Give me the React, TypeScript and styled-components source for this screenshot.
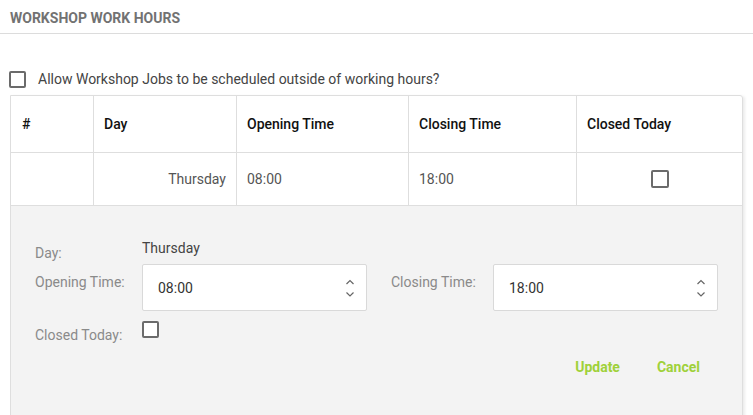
import React from "react";
import styled, { createGlobalStyle } from "styled-components";

const Global = createGlobalStyle`
  html, body { margin: 0; padding: 0; background: #fff; }
  body { font-family: Roboto, "Noto Sans", Arial, sans-serif; color: #333; overflow: hidden; }
  * { box-sizing: border-box; }
`;

const Page = styled.div`
  width: 753px;
  height: 415px;
  overflow: hidden;
`;

const TitleBar = styled.div`
  height: 34px;
  border-bottom: 1px solid #dcdcdc;
  padding: 10px 0 0 10px;
  font-size: 14px;
  font-weight: 700;
  color: #727272;
  line-height: 16px;
`;

const AllowRow = styled.label`
  display: flex;
  align-items: center;
  gap: 12px;
  margin: 37px 0 0 9px;
  height: 16px;
  font-size: 14px;
  color: #444;
`;

const Box = styled.span<{ $size?: number }>`
  display: inline-block;
  flex: none;
  width: ${(p) => p.$size ?? 17}px;
  height: ${(p) => p.$size ?? 17}px;
  border: 2px solid #6b6b6b;
  border-radius: 2px;
  background: #fff;
`;

const Card = styled.div`
  margin: 8px 0 0 10px;
  width: 733px;
  height: 330px;
  border: 1px solid #dedede;
  border-radius: 0 3px 0 0;
  box-shadow: 2px 1px 3px rgba(0, 0, 0, 0.08);
  overflow: hidden;
`;

const Row = styled.div<{ $h: number }>`
  display: grid;
  grid-template-columns: 82px 143px 172px 168px 1fr;
  height: ${(p) => p.$h}px;
  border-bottom: 1px solid #dedede;
`;

const Cell = styled.div<{ $head?: boolean; $align?: "left" | "right" | "center" }>`
  display: flex;
  align-items: center;
  justify-content: ${(p) =>
    p.$align === "right" ? "flex-end" : p.$align === "center" ? "center" : "flex-start"};
  padding: 0 10px 0 10px;
  border-left: 1px solid #dedede;
  font-size: 14px;
  font-weight: ${(p) => (p.$head ? 500 : 400)};
  color: ${(p) => (p.$head ? "#111" : "#555")};
  &:first-child { border-left: none; padding-left: 11px; }
`;

const Panel = styled.div`
  background: #f3f3f3;
  height: 100%;
  padding: 34px 0 0 24px;
`;

const FormGrid = styled.div`
  display: grid;
  grid-template-columns: 107px 225px 24px 102px 225px;
  row-gap: 3px;
`;

const Label = styled.div<{ $pt: number; $col?: number }>`
  grid-column: ${(p) => p.$col ?? 1};
  padding-top: ${(p) => p.$pt}px;
  font-size: 14px;
  line-height: 16px;
  color: #8a8a8a;
`;

const Value = styled.div<{ $col?: number }>`
  grid-column: ${(p) => p.$col ?? 2};
  font-size: 14px;
  line-height: 16px;
  color: #444;
`;

const TimeInput = styled.div<{ $col: number }>`
  grid-column: ${(p) => p.$col};
  height: 47px;
  background: #fff;
  border: 1px solid #d9d9d9;
  border-radius: 2px;
  display: flex;
  align-items: center;
  justify-content: space-between;
  padding: 0 11px 0 15px;
  font-size: 14px;
  color: #333;
`;

const Spin = styled.svg`
  width: 10px;
  height: 24px;
  margin-top: 1px;
`;

const CheckCell = styled.div`
  grid-column: 2;
  padding-top: 7px;
`;

const Actions = styled.div`
  display: flex;
  justify-content: flex-end;
  gap: 37px;
  width: 665px;
  margin-top: 16px;
`;

const LinkButton = styled.button`
  border: none;
  background: none;
  padding: 0;
  font-family: inherit;
  font-size: 14px;
  line-height: 16px;
  font-weight: 700;
  color: #9fd13a;
  cursor: pointer;
`;

const Spinner = () => (
  <Spin viewBox="0 0 10 24">
    <path d="M1.5 8 L5 4.5 L8.5 8" fill="none" stroke="#666" strokeWidth="1.2" />
    <path d="M1.5 16.5 L5 20 L8.5 16.5" fill="none" stroke="#666" strokeWidth="1.2" />
  </Spin>
);

export default function App() {
  return (
    <Page>
      <Global />
      <TitleBar>WORKSHOP WORK HOURS</TitleBar>
      <AllowRow>
        <Box />
        Allow Workshop Jobs to be scheduled outside of working hours?
      </AllowRow>
      <Card>
        <Row $h={57}>
          <Cell $head>#</Cell>
          <Cell $head>Day</Cell>
          <Cell $head>Opening Time</Cell>
          <Cell $head>Closing Time</Cell>
          <Cell $head>Closed Today</Cell>
        </Row>
        <Row $h={53}>
          <Cell />
          <Cell $align="right">Thursday</Cell>
          <Cell>08:00</Cell>
          <Cell>18:00</Cell>
          <Cell $align="center">
            <Box $size={18} />
          </Cell>
        </Row>
        <Panel>
          <FormGrid>
            <Label $pt={5}>Day:</Label>
            <Value>Thursday</Value>
            <Label $pt={10}>Opening Time:</Label>
            <TimeInput $col={2}>
              08:00
              <Spinner />
            </TimeInput>
            <Label $pt={10} $col={4}>Closing Time:</Label>
            <TimeInput $col={5}>
              18:00
              <Spinner />
            </TimeInput>
            <Label $pt={13}>Closed Today:</Label>
            <CheckCell>
              <Box $size={17} />
            </CheckCell>
          </FormGrid>
          <Actions>
            <LinkButton>Update</LinkButton>
            <LinkButton>Cancel</LinkButton>
          </Actions>
        </Panel>
      </Card>
    </Page>
  );
}
